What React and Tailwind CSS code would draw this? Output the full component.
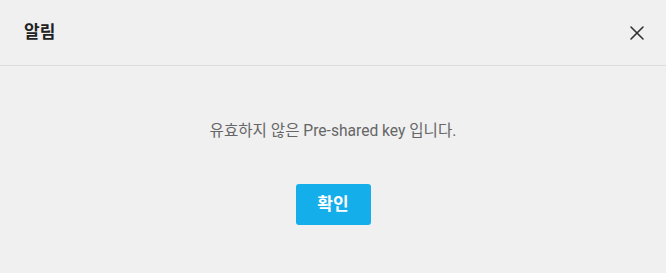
import { X } from "lucide-react";

export default function App() {
  return (
    <div
      className="w-[666px] h-[273px] bg-[#f0f0f0] flex flex-col"
      style={{ fontFamily: 'Roboto, "Noto Sans CJK KR", sans-serif' }}
    >
      <div className="h-[66px] flex items-center justify-between pl-6 pr-[17px] border-b border-[#dcdcdc]">
        <h1 className="text-[17px] font-bold text-[#222]">알림</h1>
        <X className="w-[24px] h-[24px] text-[#333]" strokeWidth={1.6} />
      </div>
      <div className="flex flex-col items-center pt-[54px]">
        <p className="text-[15.6px] text-[#666]">유효하지 않은 Pre-shared key 입니다.</p>
        <button className="mt-[41px] w-[75px] h-[41px] bg-[#14aeea] rounded-[3px] text-white text-[17px] font-bold">
          확인
        </button>
      </div>
    </div>
  );
}
